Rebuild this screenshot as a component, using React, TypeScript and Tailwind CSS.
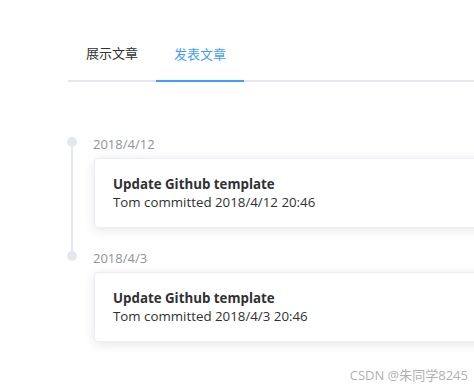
import React from "react";

const items = [
  { date: "2018/4/12", title: "Update Github template", text: "Tom committed 2018/4/12 20:46" },
  { date: "2018/4/3", title: "Update Github template", text: "Tom committed 2018/4/3 20:46" },
];

const App = () => {
  return (
    <div
      className="relative w-[474px] h-[392px] overflow-hidden bg-white"
      style={{ fontFamily: '"Open Sans", "Noto Sans CJK SC", sans-serif' }}
    >
      <div className="pt-[25px] pl-[68px] w-[560px]">
        {/* tabs */}
        <div className="flex h-[57px] border-b-2 border-[#e4e7ed]">
          <div className="w-[88px] flex items-center justify-center pt-[2px] text-[13px] text-[#303133]">
            展示文章
          </div>
          <div className="w-[88px] flex flex-col -mb-[2px]">
            <div className="flex-1 flex items-center justify-center pt-[4px] text-[13px] text-[#409eff]">
              发表文章
            </div>
            <div className="h-[2px] bg-[#409eff]" />
          </div>
        </div>

        {/* timeline */}
        <div className="mt-[55px] flex flex-col">
          {items.map((it, i) => {
            const last = i === items.length - 1;
            return (
              <div key={i} className="flex gap-[16px] -ml-[1px]">
                <div className="w-[10px] flex flex-col items-center">
                  <div className="w-[10px] h-[10px] rounded-full bg-[#e4e7ed]" />
                  {!last && <div className="flex-1 w-[2px] bg-[#e4e7ed]" />}
                </div>
                <div className={last ? "" : "pb-[23px]"}>
                  <div className="text-[13px] leading-[14px] text-[#909399] mb-[7px]">{it.date}</div>
                  <div className="w-[440px] ml-[1px] rounded-[4px] border border-[#ebeef5] bg-white shadow-[0_2px_12px_0_rgba(0,0,0,0.1)] px-[18px] py-[16px] text-[13.3px] leading-[18px] text-[#303133]">
                    <div className="font-bold">{it.title}</div>
                    <div>{it.text}</div>
                  </div>
                </div>
              </div>
            );
          })}
        </div>
      </div>

      <div className="absolute right-[6px] bottom-[7px] text-[13px] text-[#9a9a9a]/80">
        CSDN @朱同学8245
      </div>
    </div>
  );
};

export default App;
